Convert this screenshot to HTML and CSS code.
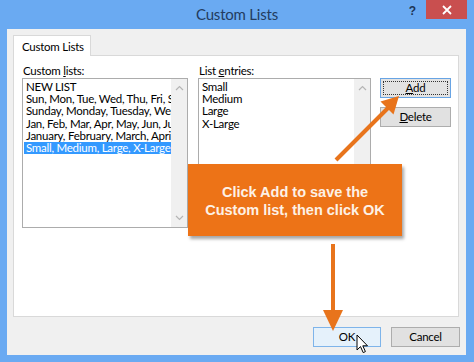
FILE: index.html
```html
<!DOCTYPE html>
<html>
<head>
<meta charset="utf-8">
<link rel="stylesheet" href="styles.css">
</head>
<body>
<div class="window">
  <div class="titlebar">
    <span></span>
    <span class="title">Custom Lists</span>
    <span class="controls">
      <span class="help">?</span>
      <span class="close"><svg width="10" height="10" viewBox="0 0 10 10"><path d="M1 1L9 9M9 1L1 9" stroke="#fff" stroke-width="1.8"/></svg></span>
    </span>
  </div>
  <div class="client">
    <div class="tabs"><div class="tab">Custom Lists</div></div>
    <div class="panel">
      <div class="col col-left">
        <div class="label">Custom <u>l</u>ists:</div>
        <div class="listbox">
          <div class="items">
            <div class="item">NEW LIST</div>
            <div class="item">Sun, Mon, Tue, Wed, Thu, Fri, Sat</div>
            <div class="item">Sunday, Monday, Tuesday, Wednesday</div>
            <div class="item">Jan, Feb, Mar, Apr, May, Jun, Jul</div>
            <div class="item">January, February, March, April</div>
            <div class="item selected">Small, Medium, Large, X-Large</div>
          </div>
          <div class="scroll">
            <svg width="9" height="6" viewBox="0 0 9 6"><path d="M1 5L4.5 1.5L8 5" fill="none" stroke="#b5b5b5" stroke-width="1.2"/></svg>
            <svg width="9" height="6" viewBox="0 0 9 6"><path d="M1 1L4.5 4.5L8 1" fill="none" stroke="#b5b5b5" stroke-width="1.2"/></svg>
          </div>
        </div>
      </div>
      <div class="col col-right">
        <div class="label">List <u>e</u>ntries:</div>
        <div class="listbox">
          <div class="items">
            <div class="item">Small</div>
            <div class="item">Medium</div>
            <div class="item">Large</div>
            <div class="item">X-Large</div>
          </div>
          <div class="scroll">
            <svg width="9" height="6" viewBox="0 0 9 6"><path d="M1 5L4.5 1.5L8 5" fill="none" stroke="#b5b5b5" stroke-width="1.2"/></svg>
            <svg width="9" height="6" viewBox="0 0 9 6"><path d="M1 1L4.5 4.5L8 1" fill="none" stroke="#b5b5b5" stroke-width="1.2"/></svg>
          </div>
        </div>
      </div>
      <div class="btncol">
        <div class="btn btn-focus"><span class="focusrect"><u>A</u>dd</span></div>
        <div class="btn"><span><u>D</u>elete</span></div>
      </div>
    </div>
    <div class="footer">
      <div class="btn btn-hover btn-ok">OK</div>
      <div class="btn btn-cancel">Cancel</div>
    </div>
  </div>
  <svg class="arrows" width="474" height="362" viewBox="0 0 474 362">
    <line x1="336" y1="160" x2="388" y2="108" stroke="#e8741c" stroke-width="4"/>
    <polygon points="399,96 380.5,101.5 393.5,114.5" fill="#e8741c"/>
    <line x1="333" y1="244" x2="333" y2="312" stroke="#e8741c" stroke-width="4"/>
    <polygon points="323,310 343,310 333,331" fill="#e8741c"/>
  </svg>
  <div class="callout">Click Add to save the<br>Custom list, then click OK</div>
  <svg class="cursor" width="13" height="20" viewBox="0 0 13 20"><path d="M1 1L1 16L4.5 12.6L7.2 18.6L9.4 17.6L6.8 11.8L11.5 11.8Z" fill="#fff" stroke="#000" stroke-width="1" stroke-linejoin="round"/></svg>
</div>
</body>
</html>
```

FILE: styles.css
```css
* { box-sizing: border-box; }
html, body { margin: 0; padding: 0; }
body {
  width: 474px;
  height: 362px;
  overflow: hidden;
  font-family: Lato, "Noto Sans", sans-serif;
  font-size: 11.5px;
  letter-spacing: -0.25px;
  color: #000;
}
.window {
  position: relative;
  width: 474px;
  height: 362px;
  background: #6aaaf2;
  display: flex;
  flex-direction: column;
}
.titlebar {
  height: 29px;
  display: grid;
  grid-template-columns: 1fr auto 1fr;
  align-items: start;
}
.title {
  font-size: 15px;
  letter-spacing: -0.2px;
  color: #233c60;
  line-height: 29px;
}
.controls {
  justify-self: end;
  display: flex;
  align-items: flex-start;
  gap: 10px;
  margin-right: 7px;
}
.help {
  font-weight: bold;
  font-size: 12px;
  color: #1d3557;
  line-height: 22px;
  letter-spacing: 0;
  font-family: "Liberation Sans", sans-serif;
}
.close {
  width: 41px;
  height: 19px;
  background: #c94f4f;
  display: flex;
  align-items: center;
  justify-content: center;
}
.client {
  flex: 1;
  margin: 0 8px 7px 7px;
  background: #f0f0f0;
  padding: 6px 7px 0 6px;
  display: flex;
  flex-direction: column;
}
.tabs {
  height: 20px;
  display: flex;
  position: relative;
  z-index: 1;
}
.tab {
  width: 78px;
  height: 21px;
  background: #fff;
  border: 1px solid #d9d9d9;
  border-bottom: none;
  padding-left: 8px;
  line-height: 22px;
}
.panel {
  height: 262px;
  background: #fff;
  border: 1px solid #d9d9d9;
  display: flex;
  padding: 8px 0 0 8px;
}
.col { display: flex; flex-direction: column; }
.col-left { width: 166px; margin-right: 10px; }
.col-right { width: 173px; margin-right: 9px; }
.label {
  height: 14px;
  line-height: 14px;
  padding-left: 1px;
}
.listbox {
  height: 150px;
  border: 1px solid #acacac;
  background: #fff;
  display: flex;
}
.items {
  flex: 1;
  overflow: hidden;
  padding: 2px 0 0 1px;
  white-space: nowrap;
}
.item {
  height: 12.2px;
  line-height: 12.2px;
  padding-left: 2px;
}
.item.selected {
  background: #3399ff;
  color: #fff;
}
.scroll {
  width: 16px;
  background: #f0f0f0;
  display: flex;
  flex-direction: column;
  justify-content: space-between;
  align-items: center;
  padding: 6px 0 6px;
}
.btncol {
  width: 71px;
  padding-top: 14px;
  display: flex;
  flex-direction: column;
  gap: 9px;
}
.btn {
  height: 20px;
  border: 1px solid #adadad;
  background: #e1e1e1;
  display: flex;
  align-items: center;
  justify-content: center;
  line-height: 14px;
}
.btn-focus {
  border-color: #68a4e4;
  background: #e3e3e3;
  padding: 2px;
}
.focusrect {
  flex: 1;
  align-self: stretch;
  border: 1px dotted #333;
  display: flex;
  align-items: center;
  justify-content: center;
}
.footer {
  margin-top: 10px;
  display: flex;
  justify-content: flex-end;
  gap: 10px;
  margin-right: -1px;
}
.btn-ok { width: 68px; }
.btn-cancel { width: 69px; }
.btn-hover {
  background: #e5f1fb;
  border-color: #7eb4ea;
}
.arrows {
  position: absolute;
  left: 0;
  top: 0;
  pointer-events: none;
}
.callout {
  position: absolute;
  left: 188px;
  top: 164px;
  width: 214px;
  height: 72px;
  background: #ed7317;
  box-shadow: 2px 3px 3px rgba(0,0,0,0.35);
  color: #fdf1e6;
  font-family: "Liberation Sans", Arial, sans-serif;
  font-weight: bold;
  font-size: 14.5px;
  letter-spacing: 0;
  line-height: 17.5px;
  text-align: center;
  padding-top: 20px;
}
.cursor {
  position: absolute;
  left: 356px;
  top: 334px;
}
```
